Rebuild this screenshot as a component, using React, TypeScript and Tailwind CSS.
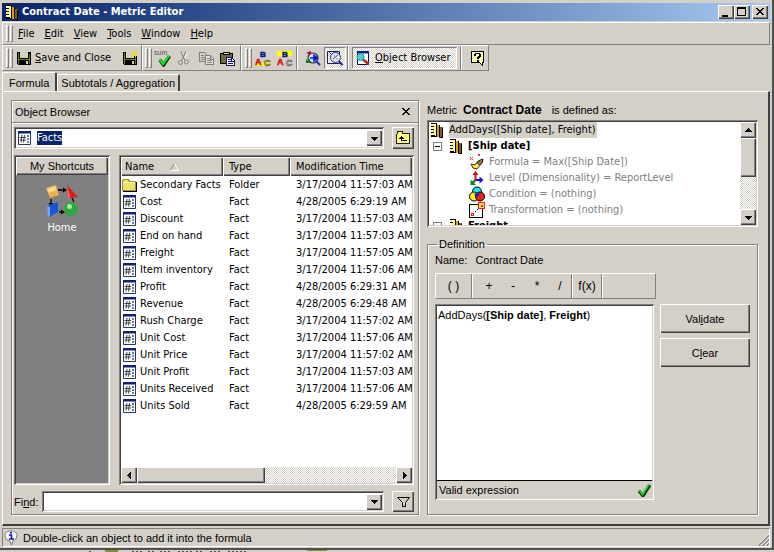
import React, { useState } from "react";

const raised =
  "bg-[#d4d0c8] shadow-[inset_1px_1px_0_#ffffff,inset_-1px_-1px_0_#404040,inset_-2px_-2px_0_#808080]";
const raisedThin = "bg-[#d4d0c8] border border-t-white border-l-white border-r-[#808080] border-b-[#808080]";
const sunken =
  "p-[2px] shadow-[inset_1px_1px_0_#808080,inset_-1px_-1px_0_#ffffff,inset_2px_2px_0_#404040,inset_-2px_-2px_0_#d4d0c8]";
const etched = "border border-[#808080] shadow-[inset_1px_1px_0_#ffffff,1px_1px_0_#ffffff]";
const dither = "bg-[repeating-conic-gradient(#ffffff_0_25%,#d4d0c8_0_50%)] bg-[length:2px_2px]";
const tahoma = "font-['DejaVu_Sans_Condensed','DejaVu_Sans',sans-serif]";
const sansSerif = "font-['Liberation_Sans',sans-serif]";

type ItemT = { name: string; type: string; modified: string };

const items: ItemT[] = [
  { name: "Secondary Facts", type: "Folder", modified: "3/17/2004 11:57:03 AM" },
  { name: "Cost", type: "Fact", modified: "4/28/2005 6:29:19 AM" },
  { name: "Discount", type: "Fact", modified: "3/17/2004 11:57:03 AM" },
  { name: "End on hand", type: "Fact", modified: "3/17/2004 11:57:03 AM" },
  { name: "Freight", type: "Fact", modified: "3/17/2004 11:57:05 AM" },
  { name: "Item inventory", type: "Fact", modified: "3/17/2004 11:57:06 AM" },
  { name: "Profit", type: "Fact", modified: "4/28/2005 6:29:31 AM" },
  { name: "Revenue", type: "Fact", modified: "4/28/2005 6:29:48 AM" },
  { name: "Rush Charge", type: "Fact", modified: "3/17/2004 11:57:02 AM" },
  { name: "Unit Cost", type: "Fact", modified: "3/17/2004 11:57:06 AM" },
  { name: "Unit Price", type: "Fact", modified: "3/17/2004 11:57:02 AM" },
  { name: "Unit Profit", type: "Fact", modified: "3/17/2004 11:57:03 AM" },
  { name: "Units Received", type: "Fact", modified: "3/17/2004 11:57:06 AM" },
  { name: "Units Sold", type: "Fact", modified: "4/28/2005 6:29:59 AM" },
];

type IconPropsT = { children: React.ReactNode; w?: number; h?: number; smooth?: boolean };

const Icon = ({ children, w = 16, h = 16, smooth }: IconPropsT) => (
  <svg
    width={w}
    height={h}
    viewBox={`0 0 ${w} ${h}`}
    fill="none"
    className="shrink-0"
    shapeRendering={smooth ? "auto" : "crispEdges"}
    aria-hidden="true"
  >
    {children}
  </svg>
);

const MetricIcon = () => (
  <Icon>
    <path d="M10 5h4v11h-4z" fill="#8a5a10" />
    <path d="M13.500 5.500v10H10.500" stroke="#000" />
    <path d="M8 3h3v12H8z" fill="#d8a020" />
    <path d="M10.500 3v12" stroke="#000" />
    <path d="M2 1h6v13H2z" fill="#ffff9c" />
    <path d="M7.500 1v13.500H2" stroke="#000" />
    <path d="M2 1.500h5M2 4.500h3M2 7.500h3M2 10.500h3M2 13.500h4" stroke="#000" />
  </Icon>
);

const FactIcon = () => (
  <Icon smooth>
    <path d="M1.500 2.500h12v12h-12z" fill="#fff" stroke="#283858" />
    <path d="M1 1h13v2.500H1z" fill="#102070" />
    <path d="M2.500 7.500h6.500M2.500 10h6.500M5 5l-1 7.500M7.500 5l-1 7.500" stroke="#303030" strokeWidth="0.900" />
    <path d="M11 5v2M11 8v2M11 11v2" stroke="#4060a0" strokeWidth="1.600" />
  </Icon>
);

const FolderIcon = () => (
  <Icon>
    <path d="M.500 4.500l1-2h5l1 2h6v9h-13z" fill="#ece06c" stroke="#a09030" />
    <path d="M1.500 5.500h11" stroke="#ffffc0" />
    <path d="M1 14.500h13.500V5" stroke="#000" />
  </Icon>
);

const SaveIcon = ({ isNew }: { isNew?: boolean }) => (
  <Icon>
    <path d="M1 2h14v13H2l-1-1z" fill="#000" />
    <path d="M2 3h1v11H2zM13 4h1v10h-1zM3 9h10v1H3z" fill="#808000" />
    <path d="M4 2h8v6H4z" fill="#d4d0c8" />
    <path d="M10 11h2v3h-2z" fill="#d4d0c8" />
    {isNew && <path d="M10 0h6v6h-6z" fill="#d4d0c8" />}
    {isNew && <path d="M13 0v7M9 3.500h7M10 1l5 5M15 1l-5 5" stroke="#e8e000" />}
  </Icon>
);

const CutIcon = () => (
  <Icon smooth>
    <path d="M6 2.500l4 9M11 2.500l-4 8" stroke="#fff" strokeWidth="1.500" />
    <path d="M5 1.500l4 9M10 1.500l-4 9" stroke="#808080" strokeWidth="1.200" />
    <circle cx="4.500" cy="12.500" r="2" stroke="#808080" />
    <circle cx="10.500" cy="12" r="2" stroke="#808080" />
  </Icon>
);

const CopyIcon = () => (
  <Icon>
    <path d="M1.500 2.500h5l3 3v6h-8z" fill="#d4d0c8" stroke="#808080" />
    <path d="M3 5.500h3M3 7.500h5M3 9.500h5" stroke="#808080" />
    <path d="M7.500 5.500h5l3 3v6h-8z" fill="#e4e1dc" stroke="#808080" />
    <path d="M9 8.500h3M9 10.500h5M9 12.500h5M12.500 6v3h3" stroke="#808080" />
  </Icon>
);

const PasteIcon = () => (
  <Icon>
    <path d="M1 3h13v11H1z" fill="#000" />
    <path d="M2 4h11v9H2z" fill="#6c6c30" />
    <path d="M4 2h7v3H4z" fill="#000" />
    <path d="M5 3h5v1H5z" fill="#e8e080" />
    <path d="M7.500 7.500h5l3 3v5h-8z" fill="#fff" stroke="#101080" />
    <path d="M9 9.500h3M9 11.500h5M9 13.500h5M12.500 8v3h3" stroke="#101080" />
  </Icon>
);

const SumCheckIcon = () => (
  <Icon w={17} h={17} smooth>
    <text x="0" y="5" fontSize="7" fill="#555" fontFamily="Liberation Sans, sans-serif">sum</text>
    <path d="M6 10l3.500 5 6-9" stroke="#063a06" strokeWidth="3.500" />
    <path d="M5.500 9l3.500 5 6-8.500" stroke="#28d828" strokeWidth="2.400" />
  </Icon>
);

// letters A, B and C, either the A and C or the B are marked in yellow
const AbcIcon = ({ mark }: { mark: "a" | "b" }) => (
  <Icon w={17} h={17} smooth>
    {mark === "a" ? <path d="M0 13h15v3H0z" fill="#ffff00" /> : <path d="M0 1h15v5H0z" fill="#ffff00" />}
    <g fontFamily="Liberation Sans, sans-serif" fontWeight="bold">
      <text x="5" y="7" fontSize="8" fill="#101880" stroke="#101880" strokeWidth="0.600">B</text>
      <text x="0" y="15" fontSize="9" fill="#d01818" stroke="#d01818" strokeWidth="0.600">A</text>
      <text x="9" y="16" fontSize="9" fill={mark === "a" ? "#ffe800" : "#d8d8d8"} stroke="#303030" strokeWidth="0.500">C</text>
    </g>
  </Icon>
);

const FindArrowIcon = () => (
  <Icon smooth>
    <circle cx="8" cy="8" r="5" fill="#d8e4ec" stroke="#282850" strokeWidth="1.200" />
    <path d="M2.500 3.500L6 2" stroke="#d00000" strokeWidth="2.200" />
    <path d="M1 9v4h4z" fill="#008000" />
    <path d="M1.500 12.500L5 9.500" stroke="#008000" strokeWidth="1.500" />
    <path d="M5 8h5M9 5l3.500 3L9 11z" fill="#0020d0" stroke="#0020d0" strokeWidth="1.400" />
    <path d="M11.500 11.500l3.500 3.500" stroke="#2030c0" strokeWidth="2" />
  </Icon>
);

const FindRectIcon = () => (
  <Icon smooth>
    <path d="M.500 1.500h12v12H.500z" stroke="#202050" />
    <circle cx="8.500" cy="7.500" r="5" fill="#e4e8f0" stroke="#303058" />
    <path d="M2 2l2 2M6 9l5-4M7 6h1M9.500 9h1" stroke="#3050c0" />
    <path d="M12 11.500l3.500 3.500" stroke="#1828a0" strokeWidth="2" />
  </Icon>
);

const BrowserIcon = () => (
  <Icon smooth>
    <path d="M2.500 1.500h11v13h-11z" fill="#fff" stroke="#101060" />
    <path d="M2 1h12v2.500H2z" fill="#102080" />
    <path d="M8 9.500l5.500 4.500" stroke="#c02020" strokeWidth="2.500" />
    <circle cx="5.500" cy="7" r="3.500" fill="#40d8d8" stroke="#308890" />
  </Icon>
);

const HelpIcon = () => (
  <Icon w={15} h={17}>
    <path d="M1.500 1.500h12v11h-1v3l-3-3h-8z" fill="#ffffb8" stroke="#000" />
    <path d="M4 4h1V3h5v1h1v3h-1v1H9v1H7V7h1V6h1V4H6v2H4zM7 10h2v2H7z" fill="#000" />
  </Icon>
);

const UpFolderIcon = () => (
  <Icon>
    <path d="M1.500 4.500l1-1v-2h5v2h7v10h-13z" fill="#ffff80" stroke="#202000" />
    <path d="M6.500 11V6M4 8.500h5M5 7.500h3M6 10.500h6" stroke="#000" />
  </Icon>
);

const HomeIcon = () => (
  <Icon w={34} h={34} smooth>
    <path d="M13 6h7M6 15v6M14 28h4M27 14l2 4" stroke="#000" strokeWidth="1.300" />
    <path d="M18 3.500l4 2.500-4 2.500zM3.500 19h5L6 23zM16 25.500l4 2.500-4 2.500z" fill="#000" />
    <path d="M1 4l10-3 3 10-9 3z" fill="#eeb04c" />
    <path d="M2 5l8-3 1 4-7 3z" fill="#ffd890" />
    <path d="M22 1l11 12-10 1z" fill="#d82020" />
    <path d="M22 1l3 12-2 1z" fill="#ff7060" />
    <path d="M2 22l11-4v10l-9 5z" fill="#1858d8" />
    <path d="M2 22l3 1v9l-2 1z" fill="#70a8ff" />
    <circle cx="26" cy="25" r="7" fill="#30a840" />
    <circle cx="24.500" cy="22.500" r="2.500" fill="#a0f0a0" />
  </Icon>
);

const FormulaIcon = () => (
  <Icon smooth>
    <path d="M2 10l4 1 3-4 5-2-1 4-5 6-4-1z" fill="#ffe060" stroke="#403000" />
    <path d="M8 9l5-4 1 3-4 3z" fill="#a08040" stroke="#000" strokeWidth="0.600" />
    <path d="M1 3l3 3M4 3L1 6M9 0l2 2M11 0L9 2" stroke="#d04040" />
  </Icon>
);

const LevelIcon = () => (
  <Icon smooth>
    <path d="M6.500 3v7" stroke="#d01010" strokeWidth="2" />
    <path d="M3.500 5l3-4 3 4z" fill="#d01010" />
    <path d="M7 10h5" stroke="#1010d0" strokeWidth="2" />
    <path d="M10.500 6.500L14.500 10l-4 3.500z" fill="#1010d0" />
    <path d="M6.500 10l-3 3" stroke="#108020" strokeWidth="2.400" />
    <path d="M1.500 9.500v5.500h5.500z" fill="#108020" />
  </Icon>
);

const ConditionIcon = () => (
  <Icon smooth>
    <circle cx="8" cy="5.500" r="4.500" fill="#20e8f0" stroke="#000" />
    <circle cx="5" cy="10.500" r="4.500" fill="#f8f020" stroke="#000" />
    <circle cx="11" cy="10.500" r="4.500" fill="#e82020" stroke="#000" />
    <path d="M8 7l3 1-3 3-3-3z" fill="#2020c0" />
  </Icon>
);

const TransformationIcon = () => (
  <Icon>
    <path d="M.500 2.500h13v13h-13z" fill="#fff" stroke="#000" />
    <path d="M9.500.500h6v6h-6z" fill="#ffe040" stroke="#e02020" />
    <path d="M12 3h2v2h-2z" fill="#e02020" />
    <path d="M2.500 11.500h2v2h-2z" stroke="#e02020" />
    <path d="M6 9h1v1H6zM8 7h1v1H8z" fill="#000" />
  </Icon>
);

const InfoIcon = () => (
  <Icon smooth>
    <path d="M8 1c4 0 6 2 6 4.500s-2 5-4 5L8.500 15l-2-4.500c-3 0-4.500-2.500-4.500-5S4 1 8 1z" fill="#fff" stroke="#707070" />
    <path d="M6 5h2.500v4M6 9h5" stroke="#1010c0" strokeWidth="1.600" />
    <path d="M7 2h2v1.600H7z" fill="#1010c0" />
  </Icon>
);

const ArrowIcon = ({ dir }: { dir: "up" | "down" | "left" | "right" }) => (
  <Icon w={7} h={7}>
    {dir === "up" && <path d="M3 1h1v1h1v1h1v1h1v1H0V4h1V3h1V2h1z" fill="#000" />}
    {dir === "down" && <path d="M0 2h7v1H6v1H5v1H4v1H3V5H2V4H1V3H0z" fill="#000" />}
    {dir === "left" && <path d="M5 0v7H4V6H3V5H2V4H1V3h1V2h1V1h1V0z" fill="#000" />}
    {dir === "right" && <path d="M2 0v7h1V6h1V5h1V4h1V3H5V2H4V1H3V0z" fill="#000" />}
  </Icon>
);

const ArrowButton = ({ dir, label }: { dir: "up" | "down" | "left" | "right"; label: string }) => (
  <button type="button" aria-label={label} className={`flex h-4 w-4 shrink-0 items-center justify-center ${raised}`}>
    <ArrowIcon dir={dir} />
  </button>
);

const Grip = () => (
  <span className="flex gap-px self-stretch py-[2px]">
    <span className="w-[3px] border border-t-white border-l-white border-r-[#808080] border-b-[#808080]" />
    <span className="w-[3px] border border-t-white border-l-white border-r-[#808080] border-b-[#808080]" />
  </span>
);

const Separator = () => <span className="w-[2px] self-stretch border-l border-l-[#808080] bg-white" />;

const ToolButton = ({ label, children }: { label: string; children: React.ReactNode }) => (
  <button type="button" aria-label={label} className="flex h-[22px] w-[22px] items-center justify-center">
    {children}
  </button>
);

const menus = ["File", "Edit", "View", "Tools", "Window", "Help"];

const TreeDetail = ({ icon, text }: { icon: React.ReactNode; text: string }) => (
  <li className="flex h-4 items-center gap-1 pl-10 text-[#808080]">
    {icon}
    <span>{text}</span>
  </li>
);

const TreeBranch = ({ text }: { text: string }) => (
  <div className="flex h-4 items-center gap-1 pl-1 font-bold">
    <button
      type="button"
      aria-label={`Collapse ${text}`}
      className="mr-[2px] flex h-[9px] w-[9px] items-center justify-center border border-[#808080]"
    >
      <span className="h-px w-[5px] bg-black" />
    </button>
    <MetricIcon />
    <span>{text}</span>
  </div>
);

const ObjectBrowser = () => {
  const [find, setFind] = useState("");

  return (
    <section className={`flex min-w-0 flex-col ${etched}`}>
      <div className="flex h-[22px] items-center justify-between border-b border-[#808080] pr-2 pl-[3px]">
        <h2 className={sansSerif}>Object Browser</h2>
        <button type="button" aria-label="Close object browser">
          <Icon w={9} h={9}><path d="M1 1l7 7M2 1l7 7M8 1L1 8M9 1L2 8" stroke="#000" /></Icon>
        </button>
      </div>
      <div className="flex flex-1 flex-col gap-[6px] border-t border-white px-[2px] pt-[3px] pb-[2px]">
        <div className="flex items-center gap-2 pr-[2px]">
          <div className={`flex h-[22px] flex-1 items-center bg-white ${sunken}`}>
            <span className="mr-1 ml-px"><FactIcon /></span>
            <select aria-label="Location" className="h-[14px] field-sizing-content appearance-none bg-[#0a246a] text-white">
              <option>Facts</option>
            </select>
            <span className="flex-1" />
            <ArrowButton dir="down" label="Open location list" />
          </div>
          <button type="button" aria-label="Up one level" className={`flex h-[22px] w-[22px] items-center justify-center ${raised}`}>
            <UpFolderIcon />
          </button>
        </div>

        <div className="flex min-h-[328px] flex-1 gap-[9px] pr-[2px]">
          <div className={`w-24 shrink-0 bg-[#808080] ${sunken}`}>
            <button type="button" className={`h-[18px] w-full text-center ${raised} ${sansSerif}`}>My Shortcuts</button>
            <button type="button" className="flex w-full flex-col items-center gap-[3px] pt-[9px] text-white">
              <HomeIcon />
              <span>Home</span>
            </button>
          </div>

          <div className={`flex min-w-0 flex-1 flex-col bg-white ${sunken}`}>
            <div className="flex-1 overflow-hidden">
              <table className="w-full table-fixed border-collapse whitespace-nowrap">
                <thead>
                  <tr className="h-[19px] text-left">
                    <th className={`w-[102px] p-0 pl-1 font-normal ${raised}`}>
                      <span className="flex items-center gap-4">
                        Name
                        <Icon w={9} h={8} smooth>
                          <path d="M.500 7L4.500.500" stroke="#808080" />
                          <path d="M4.500.500L8.500 7.500H0" stroke="#fff" />
                        </Icon>
                      </span>
                    </th>
                    <th className={`w-[67px] p-0 pl-[6px] font-normal ${raised}`}>Type</th>
                    <th className={`p-0 pl-[6px] font-normal ${raised}`}>Modification Time</th>
                  </tr>
                </thead>
                <tbody>
                  {items.map((item) => (
                    <tr key={item.name} className="h-[17px]">
                      <td className="p-0 pl-px">
                        <span className="flex items-center gap-[2px]">
                          {item.type === "Folder" ? <FolderIcon /> : <FactIcon />}
                          {item.name}
                        </span>
                      </td>
                      <td className="p-0 pl-[6px]">{item.type}</td>
                      <td className="p-0 pl-[6px]">{item.modified}</td>
                    </tr>
                  ))}
                </tbody>
              </table>
            </div>
            <div className={`flex h-4 ${dither}`}>
              <ArrowButton dir="left" label="Scroll left" />
              <span className={`w-32 ${raised}`} />
              <span className="flex-1" />
              <ArrowButton dir="right" label="Scroll right" />
            </div>
          </div>
        </div>

        <div className="flex items-center pr-[2px]">
          <label htmlFor="find" className={`w-7 ${sansSerif}`}>Fi<u>n</u>d:</label>
          <div className={`mr-2 flex h-[21px] flex-1 items-center bg-white ${sunken}`}>
            <input
              id="find"
              value={find}
              onChange={(event) => setFind(event.target.value)}
              className="h-full min-w-0 flex-1 px-1 outline-none"
            />
            <ArrowButton dir="down" label="Recent searches" />
          </div>
          <button type="button" aria-label="Filter" className={`flex h-[21px] w-[22px] items-center justify-center ${raised}`}>
            <Icon w={13} h={12} smooth>
              <path d="M.500 1.500h12L8.500 6.500v4h-3v-4z" stroke="#000" />
            </Icon>
          </button>
        </div>
      </div>
    </section>
  );
};

const MetricDefinition = () => (
  <section className="flex min-w-0 flex-col">
    <p className={`flex h-5 items-center gap-[6px] ${sansSerif}`}>
      Metric <b className="text-[12px]">Contract Date</b> <span className="pl-1">is defined as:</span>
    </p>

    <div className={`flex h-[107px] bg-white ${sunken}`}>
      <ul className="min-w-0 flex-1 overflow-hidden whitespace-nowrap">
        <li className="flex h-4 items-center gap-1">
          <MetricIcon />
          <span className="h-4 bg-[#d4d0c8] pr-px leading-4">AddDays([Ship date], Freight)</span>
        </li>
        <li>
          <TreeBranch text="[Ship date]" />
          <ul>
            <TreeDetail icon={<FormulaIcon />} text="Formula = Max([Ship Date])" />
            <TreeDetail icon={<LevelIcon />} text="Level (Dimensionality) = ReportLevel" />
            <TreeDetail icon={<ConditionIcon />} text="Condition = (nothing)" />
            <TreeDetail icon={<TransformationIcon />} text="Transformation = (nothing)" />
          </ul>
        </li>
        <li>
          <TreeBranch text="Freight" />
        </li>
      </ul>
      <div className={`flex w-4 flex-col ${dither}`}>
        <ArrowButton dir="up" label="Scroll up" />
        <span className={`h-[39px] ${raised}`} />
        <span className="flex-1" />
        <ArrowButton dir="down" label="Scroll down" />
      </div>
    </div>

    <fieldset className={`mt-[9px] flex flex-1 flex-col px-[7px] pb-[14px] ${etched} ${sansSerif}`}>
      <legend className="ml-[2px] px-[2px] leading-4">Definition</legend>
      <p className="flex gap-2 leading-4">
        <span>Name:</span>
        <span>Contract Date</span>
      </p>
      <div className={`mt-[5px] mr-[94px] flex h-[26px] items-center text-center text-[12px] ${raisedThin}`}>
        <button type="button" className="w-[35px] whitespace-pre">( )</button>
        <Separator />
        <button type="button" className="ml-1 w-6">+</button>
        <button type="button" className="w-6">-</button>
        <button type="button" className="w-6">*</button>
        <button type="button" className="w-[22px]">/</button>
        <Separator />
        <button type="button" className="w-7">f(x)</button>
        <Separator />
      </div>
      <div className="mt-[5px] flex flex-1 gap-[6px]">
        <div className={`flex min-w-0 flex-1 flex-col bg-white ${sunken}`}>
          <div
            role="textbox"
            aria-label="Formula"
            contentEditable
            suppressContentEditableWarning
            className="flex-1 px-px pt-[2px] outline-none"
          >
            AddDays(<b>[Ship date]</b>, <b>Freight</b>)
          </div>
          <div className="flex h-[18px] items-center justify-between border-t border-black bg-[#d4d0c8] pr-px pl-[2px]">
            <span>Valid expression</span>
            <Icon w={14} h={14} smooth>
              <path d="M2 8l4 5 7-11" stroke="#043004" strokeWidth="3" />
              <path d="M2 7l3.500 4.500L12 1.500" stroke="#28c828" strokeWidth="2" />
            </Icon>
          </div>
        </div>
        <div className="flex w-[90px] flex-col gap-[5px]">
          <button type="button" className={`h-[29px] ${raised}`}>Val<u>i</u>date</button>
          <button type="button" className={`h-[29px] ${raised}`}>C<u>l</u>ear</button>
        </div>
      </div>
    </fieldset>
  </section>
);

const App = () => {
  const [tab, setTab] = useState("Formula");

  return (
    <div className={`flex min-h-screen flex-col bg-[#d4d0c8] text-[11px] leading-[14px] text-black ${tahoma}`}>
      <div className="flex flex-1 flex-col border-r-2 border-b-2 border-[#505050] pt-[3px] pr-[2px] pb-px pl-[2px]">
        <header className="flex h-[18px] items-center gap-[2px] bg-linear-to-r from-[#0a246a] to-[#a6caf0] px-[2px]">
          <MetricIcon />
          <h1 className="flex-1 font-bold text-white">Contract Date - Metric Editor</h1>
          <span className="flex">
            <button type="button" aria-label="Minimize" className={`h-[14px] w-4 ${raised}`}>
              <Icon w={16} h={14}><path d="M4 10h6v2H4z" fill="#000" /></Icon>
            </button>
            <button type="button" aria-label="Maximize" className={`h-[14px] w-4 ${raised}`}>
              <Icon w={16} h={14}><path d="M3 2h9v9H3zM4 4v6h7V4z" fill="#000" fillRule="evenodd" /></Icon>
            </button>
          </span>
          <button type="button" aria-label="Close" className={`h-[14px] w-4 ${raised}`}>
            <Icon w={16} h={14}><path d="M4 3l7 7M5 3l7 7M11 3l-7 7M12 3l-7 7" stroke="#000" /></Icon>
          </button>
        </header>

        <nav className={`mt-px flex h-[23px] items-center px-[3px] ${raisedThin}`}>
          <Grip />
          <div className="flex gap-[10px] pl-[5px]">
            {menus.map((menu) => (
              <button type="button" key={menu}>
                <u>{menu[0]}</u>
                {menu.slice(1)}
              </button>
            ))}
          </div>
        </nav>

        <div className="flex h-[26px]">
          <div className={`flex w-[140px] items-center pl-[3px] ${raisedThin}`}>
            <Grip />
            <button type="button" className="flex items-center gap-[3px] pl-[3px]">
              <SaveIcon />
              <span><u>S</u>ave and Close</span>
            </button>
            <span className="flex-1" />
            <ToolButton label="Save as new"><SaveIcon isNew /></ToolButton>
          </div>
          <div className={`flex w-[99px] items-center px-[2px] ${raisedThin}`}>
            <Grip />
            <ToolButton label="Validate formula"><SumCheckIcon /></ToolButton>
            <ToolButton label="Cut"><CutIcon /></ToolButton>
            <ToolButton label="Copy"><CopyIcon /></ToolButton>
            <ToolButton label="Paste"><PasteIcon /></ToolButton>
          </div>
          <div className={`flex items-center pl-[3px] ${raisedThin}`}>
            <Grip />
            <ToolButton label="Mark attributes"><AbcIcon mark="a" /></ToolButton>
            <ToolButton label="Mark functions"><AbcIcon mark="b" /></ToolButton>
            <Separator />
            <span className="w-1" />
            <ToolButton label="Search"><FindArrowIcon /></ToolButton>
            <button type="button" aria-label="Details" className={`flex h-[22px] w-[22px] items-center justify-center border border-t-[#808080] border-l-[#808080] border-r-white border-b-white ${dither}`}>
              <FindRectIcon />
            </button>
            <span className="w-px" />
            <Separator />
            <button type="button" className={`mx-[3px] flex h-[22px] items-center gap-1 border border-t-[#808080] border-l-[#808080] border-r-white border-b-white pr-[6px] pl-[2px] ${dither}`}>
              <BrowserIcon />
              <span><u>O</u>bject Browser</span>
            </button>
            <Separator />
            <span className="w-1" />
            <ToolButton label="Help"><HelpIcon /></ToolButton>
          </div>
        </div>

        <div role="tablist" className={`flex h-5 items-end ${sansSerif}`}>
          {["Formula", "Subtotals / Aggregation"].map((name) => (
            <button
              type="button"
              role="tab"
              key={name}
              aria-selected={tab === name}
              onClick={() => setTab(name)}
              className={`rounded-t-[2px] border-t border-l border-t-white border-l-white border-r-2 border-r-[#404040] ${
                tab === name ? "-mb-px h-5 bg-[#d4d0c8] px-[6px]" : "h-[17px] px-[3px]"
              }`}
            >
              {name}
            </button>
          ))}
        </div>

        <main className="grid flex-1 grid-cols-[408fr_331fr] gap-[8px] border-t border-l border-r-2 border-b-2 border-t-white border-l-white border-r-[#404040] border-b-[#404040] pt-[8px] pr-[10px] pb-[9px] pl-[8px]">
          <ObjectBrowser />
          <MetricDefinition />
        </main>

        <footer className={`mt-[2px] flex h-[19px] items-center gap-1 border border-t-[#808080] border-l-[#808080] border-r-white border-b-white ${sansSerif}`}>
          <InfoIcon />
          <span className="flex-1">Double-click an object to add it into the formula</span>
          <span className="self-end">
            <Icon w={12} h={12} smooth>
              <path d="M1 12L12 1M5 12l7-7M9 12l3-3" stroke="#808080" strokeWidth="1.600" />
              <path d="M0 12L12 0M4 12l8-8M8 12l4-4" stroke="#fff" strokeWidth="0.800" />
            </Icon>
          </span>
        </footer>
      </div>
      <div className="flex h-[2px] items-start pl-[88px]">
        <Icon w={250} h={2}>
          <path d="M1 1h4M44 1h10M60 1h6M72 1h12M90 1h14M108 1h8M122 1h12M140 1h18" stroke="#505050" strokeDasharray="2 2" />
          <path d="M17 0h13v2H17zM219 0h20v1h-20z" fill="#8c8c30" />
        </Icon>
      </div>
    </div>
  );
};

export default App;
